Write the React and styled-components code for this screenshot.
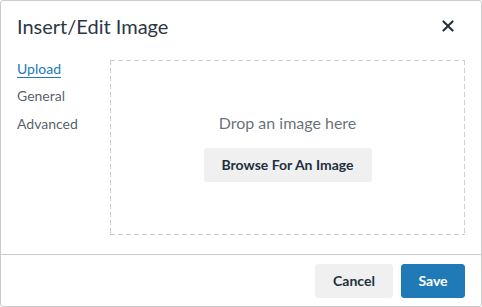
import React from "react";
import styled, { createGlobalStyle } from "styled-components";

const Global = createGlobalStyle`
  html, body { margin: 0; padding: 0; background: #fff; }
  body { font-family: Lato, "Open Sans", sans-serif; }
  * { box-sizing: border-box; }
`;

const Dialog = styled.div`
  width: 482px;
  height: 307px;
  border: 1px solid #cccccc;
  border-radius: 3px;
  background: #fff;
  display: flex;
  flex-direction: column;
  color: #222f3e;
`;

const Header = styled.div`
  height: 42px;
  padding: 8px 16px 0 16px;
  display: flex;
  align-items: center;
  justify-content: space-between;
`;

const Title = styled.h1`
  margin: 0;
  font-size: 20px;
  font-weight: 400;
  line-height: 34px;
  color: #2b3744;
`;

const CloseButton = styled.button`
  width: 34px;
  height: 34px;
  padding: 0;
  border: 0;
  background: transparent;
  display: flex;
  align-items: center;
  justify-content: center;
  color: #222f3e;
`;

const Body = styled.div`
  height: 211px;
  padding: 17px 16px 19px 16px;
  display: flex;
  gap: 16px;
`;

const Tabs = styled.div`
  width: 77px;
  display: flex;
  flex-direction: column;
  align-items: flex-start;
`;

const Tab = styled.div`
  font-size: 14px;
  line-height: 18px;
  height: 18px;
  margin-bottom: ${(p) => p.$gap}px;
  color: ${(p) => (p.$active ? "#207ab7" : "rgba(34,47,62,0.78)")};
  border-bottom: ${(p) => (p.$active ? "1px solid #207ab7" : "0")};
  cursor: pointer;
`;

const dash = "#cccccc";

const DropZone = styled.div`
  flex: 1;
  height: 175px;
  background-image:
    repeating-linear-gradient(90deg, ${dash} 0 5px, transparent 5px 8px),
    repeating-linear-gradient(90deg, ${dash} 0 5px, transparent 5px 8px),
    repeating-linear-gradient(180deg, ${dash} 0 5px, transparent 5px 8px),
    repeating-linear-gradient(180deg, ${dash} 0 5px, transparent 5px 8px);
  background-size: 100% 1px, 100% 1px, 1px 100%, 1px 100%;
  background-position: 0 0, 0 100%, 0 0, 100% 0;
  background-repeat: no-repeat;
  display: flex;
  flex-direction: column;
  align-items: center;
  justify-content: center;
  gap: 13px;
  padding-bottom: 2px;
`;

const DropText = styled.div`
  font-size: 16px;
  line-height: 24px;
  color: rgba(34,47,62,0.7);
`;

const Button = styled.button`
  font-family: inherit;
  font-size: 14px;
  font-weight: 700;
  line-height: 24px;
  height: 34px;
  padding: 4px 16px;
  border-radius: 3px;
  border: 1px solid ${(p) => (p.$primary ? "#207ab7" : "#f0f0f0")};
  background: ${(p) => (p.$primary ? "#207ab7" : "#f0f0f0")};
  color: ${(p) => (p.$primary ? "#fff" : "#222f3e")};
  width: ${(p) => p.$w}px;
  cursor: pointer;
`;

const Footer = styled.div`
  height: 52px;
  border-top: 1px solid #cccccc;
  padding: 9px 16px 8px 16px;
  display: flex;
  justify-content: flex-end;
  gap: 8px;
`;

const CloseIcon = () => (
  <svg width="24" height="24" viewBox="0 0 24 24" fill="currentColor">
    <path d="M17.3 8.2L13.4 12l3.9 3.8a1 1 0 01-1.5 1.5L12 13.4l-3.8 3.9a1 1 0 01-1.5-1.5l3.9-3.8-3.9-3.8a1 1 0 011.5-1.5l3.8 3.9 3.8-3.9a1 1 0 011.5 1.5z" />
  </svg>
);

export default function App() {
  return (
    <>
      <Global />
      <Dialog>
        <Header>
          <Title>Insert/Edit Image</Title>
          <CloseButton aria-label="Close">
            <CloseIcon />
          </CloseButton>
        </Header>
        <Body>
          <Tabs>
            <Tab $active $gap={9}>Upload</Tab>
            <Tab $gap={10}>General</Tab>
            <Tab $gap={0}>Advanced</Tab>
          </Tabs>
          <DropZone>
            <DropText>Drop an image here</DropText>
            <Button $w={168}>Browse For An Image</Button>
          </DropZone>
        </Body>
        <Footer>
          <Button $w={78}>Cancel</Button>
          <Button $primary $w={64}>Save</Button>
        </Footer>
      </Dialog>
    </>
  );
}
